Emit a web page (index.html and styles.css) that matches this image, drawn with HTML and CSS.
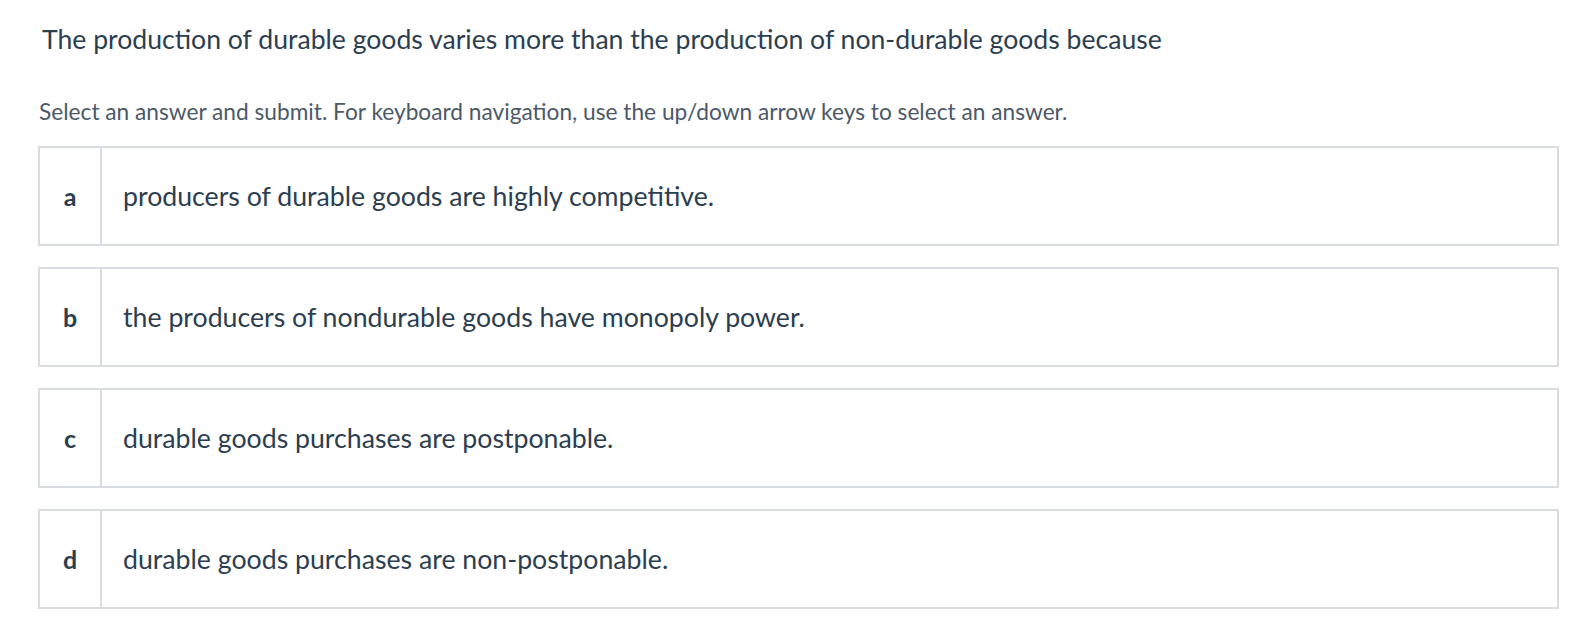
FILE: index.html
```html
<!DOCTYPE html>
<html lang="en">
<head>
<meta charset="utf-8">
<title>Question</title>
<link rel="stylesheet" href="styles.css">
</head>
<body>
<main class="question">
  <h1 class="prompt">The production of durable goods varies more than the production of non-durable goods because</h1>
  <p class="instructions">Select an answer and submit. For keyboard navigation, use the up/down arrow keys to select an answer.</p>
  <ul class="options" role="radiogroup">
    <li class="option" role="radio" aria-checked="false"><span class="letter">a</span><span class="text">producers of durable goods are highly competitive.</span></li>
    <li class="option" role="radio" aria-checked="false"><span class="letter">b</span><span class="text">the producers of nondurable goods have monopoly power.</span></li>
    <li class="option" role="radio" aria-checked="false"><span class="letter">c</span><span class="text">durable goods purchases are postponable.</span></li>
    <li class="option" role="radio" aria-checked="false"><span class="letter">d</span><span class="text">durable goods purchases are non-postponable.</span></li>
  </ul>
</main>
</body>
</html>
```
FILE: styles.css
```css
html, body {
  margin: 0;
  padding: 0;
  background: #ffffff;
}

body {
  font-family: "Lato", "Liberation Sans", sans-serif;
  color: #2c3e50;
}

.question {
  padding: 0 17px 0 38px;
}

.prompt {
  margin: 0;
  padding: 21px 0 0 4px;
  height: 37px;
  font-size: 26.6px;
  line-height: 37px;
  font-weight: 400;
  color: #2c3e50;
}

.instructions {
  margin: 0;
  padding: 40px 0 0 1px;
  height: 28px;
  font-size: 22.7px;
  line-height: 28px;
  color: #4b5968;
}

.options {
  list-style: none;
  margin: 20px 0 0 0;
  padding: 0;
  display: flex;
  flex-direction: column;
  gap: 21px;
}

.option {
  display: flex;
  height: 96px;
  border: 2px solid #d9dde2;
  box-sizing: content-box;
}

.letter {
  flex: 0 0 60px;
  display: flex;
  align-items: center;
  justify-content: center;
  border-right: 2px solid #d9dde2;
  font-size: 25px;
  font-weight: 700;
  color: #2c3e50;
}

.text {
  display: flex;
  align-items: center;
  padding-left: 21px;
  font-size: 26.7px;
  color: #2c3e50;
}
```
